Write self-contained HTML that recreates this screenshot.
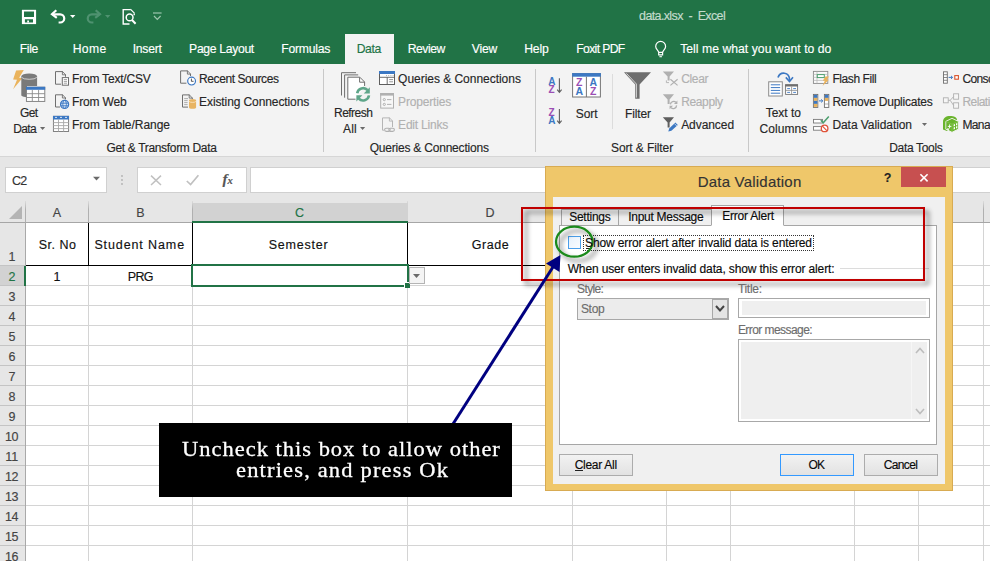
<!DOCTYPE html>
<html lang="en"><head><meta charset="utf-8"><title>data.xlsx - Excel</title>
<style>
html,body{margin:0;padding:0;background:#fff;}
#app{position:relative;width:990px;height:561px;overflow:hidden;background:#fff;font-family:"Liberation Sans",sans-serif;}
#app div,#app span,#app svg{position:absolute;}
.t{white-space:pre;line-height:1;-webkit-text-stroke:0.15px currentColor;}
.green{left:0;top:0;width:990px;height:64px;background:#217346;}
.tabsel{left:345px;top:34px;width:49px;height:31px;background:#f3f3f3;}
.ribbon{left:0;top:64px;width:990px;height:92px;background:#f3f3f3;}
.ribline{left:0;top:156px;width:990px;height:1px;background:#d6d6d6;}
.fbar{left:0;top:157px;width:990px;height:45px;background:#e6e6e6;}
.sep{width:1px;background:#c8c8c8;top:69px;height:83px;}
.sep2{width:1px;background:#dcdcdc;top:74px;height:55px;}
.box{background:#fff;border:1px solid #d0d0d0;box-sizing:border-box;}
.hdr{left:0;top:202px;width:990px;height:21px;background:#e6e6e6;}
.rowhdr{left:0;top:222px;width:25px;height:339px;background:#e6e6e6;}
.vl{width:1px;background:#d4d4d4;top:222px;height:339px;}
.hl{height:1px;background:#d4d4d4;left:25px;width:965px;}
.hs{width:1px;background:linear-gradient(#dcdcdc,#b0b0b0 40%);top:201px;height:21px;}
.rs{height:1px;background:#c4c4c4;left:0;width:25px;}
.bk{background:#000;}
.g{background:#217346;}
.dtab{box-sizing:border-box;border:1px solid #a6a6a6;background:#f0f0f0;}
.dbtn{box-sizing:border-box;border:1px solid #acacac;background:linear-gradient(#f2f2f2,#e2e2e2);}

</style></head>
<body>
<div id="app">
<div class="green"></div>
<div class="tabsel"></div>
<div class="ribbon"></div>
<div class="ribline"></div>
<div class="fbar"></div>
<div class="sep" style="left:323px"></div>
<div class="sep" style="left:535px"></div>
<div class="sep" style="left:748px"></div>
<div class="sep2" style="left:612px"></div>
<!-- formula bar -->
<div class="box" style="left:5px;top:167px;width:102px;height:26px"></div>
<div class="box" style="left:137px;top:167px;width:110px;height:26px"></div>
<div class="box" style="left:250px;top:167px;width:745px;height:26px"></div>
<!-- grid -->
<div class="hdr"></div>
<div class="rowhdr"></div>
<div class="vl" style="left:88px"></div>
<div class="vl" style="left:192px"></div>
<div class="vl" style="left:407px"></div>
<div class="vl" style="left:572px"></div>
<div class="vl" style="left:666px"></div>
<div class="vl" style="left:730px"></div>
<div class="vl" style="left:854px"></div>
<div class="vl" style="left:918px"></div>
<div class="vl" style="left:983px"></div>
<div class="hs" style="left:25px"></div>
<div class="hs" style="left:88px"></div>
<div class="hs" style="left:192px"></div>
<div class="hs" style="left:407px"></div>
<div class="hs" style="left:572px"></div>
<div class="hs" style="left:666px"></div>
<div class="hs" style="left:730px"></div>
<div class="hs" style="left:854px"></div>
<div class="hs" style="left:918px"></div>
<div class="hs" style="left:983px"></div>
<div class="hl" style="top:265px"></div>
<div class="rs" style="top:265px"></div>
<div class="hl" style="top:285px"></div>
<div class="rs" style="top:285px"></div>
<div class="hl" style="top:305px"></div>
<div class="rs" style="top:305px"></div>
<div class="hl" style="top:325px"></div>
<div class="rs" style="top:325px"></div>
<div class="hl" style="top:345px"></div>
<div class="rs" style="top:345px"></div>
<div class="hl" style="top:365px"></div>
<div class="rs" style="top:365px"></div>
<div class="hl" style="top:385px"></div>
<div class="rs" style="top:385px"></div>
<div class="hl" style="top:405px"></div>
<div class="rs" style="top:405px"></div>
<div class="hl" style="top:425px"></div>
<div class="rs" style="top:425px"></div>
<div class="hl" style="top:445px"></div>
<div class="rs" style="top:445px"></div>
<div class="hl" style="top:465px"></div>
<div class="rs" style="top:465px"></div>
<div class="hl" style="top:485px"></div>
<div class="rs" style="top:485px"></div>
<div class="hl" style="top:505px"></div>
<div class="rs" style="top:505px"></div>
<div class="hl" style="top:525px"></div>
<div class="rs" style="top:525px"></div>
<div class="hl" style="top:545px"></div>
<div class="rs" style="top:545px"></div>
<div style="left:0;top:222px;width:990px;height:1px;background:#a6a6a6"></div>
<div style="left:25px;top:222px;width:1px;height:339px;background:#a9a9a9"></div>
<div style="left:193px;top:203px;width:215px;height:19px;background:#d2d2d2"></div>
<div class="g" style="left:192px;top:221px;width:216px;height:2px"></div>
<div style="left:0;top:266px;width:24px;height:19px;background:#d2d2d2"></div>
<div class="g" style="left:24px;top:266px;width:2px;height:20px"></div>
<div class="bk" style="left:26px;top:265px;width:547px;height:1px"></div>
<div class="bk" style="left:88px;top:223px;width:1px;height:43px"></div>
<div class="bk" style="left:192px;top:223px;width:1px;height:43px"></div>
<div class="bk" style="left:407px;top:223px;width:1px;height:43px"></div>
<div class="bk" style="left:572px;top:223px;width:1px;height:43px"></div>
<div style="left:191px;top:264px;width:218px;height:23px;box-sizing:border-box;border:2px solid #217346"></div>
<div style="left:404px;top:282px;width:5px;height:5px;background:#217346;border:1px solid #fff;border-right:0;border-bottom:0"></div>
<div style="left:409px;top:267px;width:16px;height:17px;box-sizing:border-box;background:#f4f4f4;border:1px solid #b4b4b4"></div>
<svg style="left:413px;top:274px" width="8" height="5" viewBox="0 0 8 5"><path d="M0 0H7L3.5 4Z" fill="#6a6a6a"/></svg>
<svg style="left:8px;top:205px" width="15" height="15" viewBox="0 0 15 15"><path d="M14 1V14H1Z" fill="#b4b4b4"/></svg>
<!-- QAT -->
<svg style="left:21px;top:9px" width="16" height="16" viewBox="0 0 16 16"><path d="M.9 .8H15.1V15.1H.9Z" fill="#fff"/><path d="M3 2.4H13V8.1H3ZM3.9 10.3H12V13.6H3.9Z" fill="#217346"/><path d="M6.2 11.6H8V13.6H6.2Z" fill="#fff"/></svg>
<svg style="left:50px;top:9px" width="17" height="15" viewBox="0 0 17 15"><path d="M6.3 1.3L2 5.2L6.8 8.8" fill="none" stroke="#fff" stroke-width="2.2"/><path d="M2.4 5.4H10.2A4.05 4.05 0 0 1 10.2 13.5H8.6" fill="none" stroke="#fff" stroke-width="2.2"/></svg>
<svg style="left:70px;top:15px" width="6" height="3" viewBox="0 0 6 3"><path d="M0 0H5.4L2.7 3Z" fill="#fff"/></svg>
<svg style="left:85px;top:9px" width="17" height="15" viewBox="0 0 17 15"><path d="M10.7 1.3L15 5.2L10.2 8.8" fill="none" stroke="#4f9270" stroke-width="2.2"/><path d="M14.6 5.4H6.8A4.05 4.05 0 0 0 6.8 13.5H8.4" fill="none" stroke="#4f9270" stroke-width="2.2"/></svg>
<svg style="left:105px;top:15px" width="6" height="3" viewBox="0 0 6 3"><path d="M0 0H5.4L2.7 3Z" fill="#4f9270"/></svg>
<svg style="left:122px;top:8px" width="16" height="18" viewBox="0 0 16 18"><path d="M8.6 1.6H1.2V16H7.5M12.2 5.6V7.2" fill="none" stroke="#fff" stroke-width="1.4"/><path d="M8.4 1.2L12.6 5.4" fill="none" stroke="#fff" stroke-width="1.2"/><circle cx="7.6" cy="9.4" r="3.4" fill="none" stroke="#fff" stroke-width="1.5"/><path d="M10 12L13.6 15.8" stroke="#fff" stroke-width="2" fill="none"/></svg>
<svg style="left:153px;top:12px" width="9" height="9" viewBox="0 0 9 9"><path d="M0 1H8.6" stroke="#9cc5ad" stroke-width="1.2"/><path d="M1 4L4.3 7.4L7.6 4" fill="none" stroke="#9cc5ad" stroke-width="1.2"/></svg>
<!-- lightbulb -->
<svg style="left:654px;top:40px" width="14" height="19" viewBox="0 0 14 19"><path d="M4.7 12.4C4.7 10.4 1.7 9.4 1.7 6.4A4.95 4.95 0 0 1 11.6 6.4C11.6 9.4 8.6 10.4 8.6 12.4ZM4.7 12.4V14.9H8.6V12.4" fill="none" stroke="#fff" stroke-width="1.2"/><path d="M5.4 16.7H7.9" stroke="#fff" stroke-width="1.1"/></svg>
<!-- Get Data -->
<svg style="left:12px;top:69px" width="35" height="34" viewBox="12 69 35 34">
<path d="M16.1 70.4L23.8 70L19.1 77.7L22.5 78.1L13.1 89.2L17 79.8L13.1 79.4Z" fill="#eab35c"/>
<path d="M21.3 76.4V95.6C22.5 96.7 24.5 97.2 27 97.4V86H37.1V76.4Z" fill="#7a7a7a"/>
<ellipse cx="29.2" cy="76.4" rx="7.9" ry="2.9" fill="#7a7a7a"/>
<path d="M21.6 77.4A7.9 2.6 0 0 0 36.8 77.4" fill="none" stroke="#e4e4e4" stroke-width=".8"/>
<rect x="26.4" y="87.2" width="18.4" height="14.2" fill="#fff" stroke="#7a7a7a" stroke-width=".9"/>
<rect x="26" y="86.8" width="19.2" height="3" fill="#3c78c3"/>
<path d="M32.3 90V101.4M38.6 90V101.4M26.4 93.7H44.8M26.4 97.5H44.8" stroke="#8a8a8a" stroke-width=".9" fill="none"/>
</svg>
<svg style="left:40px;top:127px" width="6" height="3" viewBox="0 0 6 3"><path d="M0 0H5.2L2.6 3Z" fill="#6a6a6a"/></svg>
<!-- From Text/CSV -->
<svg style="left:54px;top:70px" width="16" height="17" viewBox="54 70 16 17">
<path d="M62.6 71.6H55.5V84.2H61M65.5 74.6V76.8" fill="none" stroke="#6f6f6f" stroke-width="1"/><path d="M62.4 71.4V74.8H65.6M62.4 71.4L65.6 74.8" fill="none" stroke="#6f6f6f" stroke-width=".9"/>
<rect x="62.3" y="77.6" width="6.2" height="7.6" fill="#fff" stroke="#6f6f6f" stroke-width="1"/>
<path d="M63.8 79.6H67M63.8 81.4H67M63.8 83.2H67" stroke="#8a8a8a" stroke-width=".8"/>
</svg>
<!-- From Web -->
<svg style="left:54px;top:93px" width="16" height="17" viewBox="54 93 16 17">
<path d="M62.6 94.8H55.5V107H60M65.5 97.8V99.4" fill="none" stroke="#6f6f6f" stroke-width="1"/><path d="M62.4 94.6V98H65.6M62.4 94.6L65.6 98" fill="none" stroke="#6f6f6f" stroke-width=".9"/>
<circle cx="64.6" cy="104.4" r="4" fill="#dbe7f6" stroke="#3c78c3" stroke-width="1.3"/>
<ellipse cx="64.6" cy="104.4" rx="1.8" ry="4" fill="none" stroke="#3c78c3" stroke-width=".9"/><path d="M60.8 103.2H68.4M60.8 105.8H68.4" stroke="#3c78c3" stroke-width=".9"/>
</svg>
<!-- From Table/Range -->
<svg style="left:52px;top:115px" width="18" height="18" viewBox="52 115 18 18">
<rect x="53.4" y="116.3" width="15.2" height="15.2" fill="#fff" stroke="#757575" stroke-width=".9"/>
<rect x="53" y="115.9" width="16" height="3.6" fill="#3c78c3"/>
<path d="M55 117.4H57M60 117.4H62M65 117.4H67" stroke="#fff" stroke-width=".8"/>
<path d="M58.5 119.5V131.5M63.6 119.5V131.5M53.4 122.6H68.6M53.4 125.6H68.6M53.4 128.6H68.6" stroke="#a8a8a8" stroke-width=".9" fill="none"/>
</svg>
<!-- Recent Sources -->
<svg style="left:179px;top:69px" width="18" height="18" viewBox="179 69 18 18">
<path d="M187.6 70.9H180.6V83.2H186.4M190.5 73.9V76" fill="none" stroke="#6f6f6f" stroke-width="1"/><path d="M187.4 70.7V74.1H190.6M187.4 70.7L190.6 74.1" fill="none" stroke="#6f6f6f" stroke-width=".9"/>
<circle cx="191.6" cy="81.1" r="3.9" fill="#fff" stroke="#3c78c3" stroke-width="1.2"/><path d="M191.4 78.6V81.3H193.6" fill="none" stroke="#444" stroke-width=".9"/>
</svg>
<!-- Existing Connections -->
<svg style="left:181px;top:93px" width="17" height="17" viewBox="181 93 17 17">
<path d="M189.4 94.9H182.5V107.1H188M192.3 97.9V99" fill="none" stroke="#6f6f6f" stroke-width="1"/><path d="M189.2 94.7V98.1H192.4M189.2 94.7L192.4 98.1" fill="none" stroke="#6f6f6f" stroke-width=".9"/>
<path d="M184.2 98.6H188M184.2 100.6H187.6M184.2 102.6H187.6M184.2 104.6H187.6" stroke="#9a9a9a" stroke-width=".8"/>
<path d="M189 100.4V107.2A3.55 1.5 0 0 0 196.1 107.2V100.4Z" fill="#e8b463"/><ellipse cx="192.55" cy="100.4" rx="3.55" ry="1.5" fill="#e8b463"/><path d="M189.2 101.4A3.5 1.4 0 0 0 195.9 101.4" fill="none" stroke="#fbe9cc" stroke-width=".8"/>
</svg>
<!-- Refresh All -->
<svg style="left:340px;top:71px" width="32" height="32" viewBox="340 71 32 32">
<path d="M341.5 95.5V72.7H356" fill="none" stroke="#6f6f6f" stroke-width="1"/>
<path d="M344.6 97.7V74.9H358.2" fill="none" stroke="#6f6f6f" stroke-width="1"/>
<path d="M355.5 99.2H347.8V77.2H359.8L364.6 82V86" fill="#fff" stroke="#6f6f6f" stroke-width="1"/>
<path d="M359.6 77.4V82.2H364.4" fill="none" stroke="#6f6f6f" stroke-width="1"/>
<path d="M357.2 93.2A6 6 0 0 1 367.6 90.2" fill="none" stroke="#5fa68a" stroke-width="2.6"/><path d="M369.8 87.2V93.4H363.8Z" fill="#5fa68a"/>
<path d="M369 95.4A6 6 0 0 1 358.6 98.4" fill="none" stroke="#5fa68a" stroke-width="2.6"/><path d="M356.4 101.4V95.2H362.4Z" fill="#5fa68a"/>
</svg>
<svg style="left:360px;top:127px" width="6" height="3" viewBox="0 0 6 3"><path d="M0 0H5.2L2.6 3Z" fill="#6a6a6a"/></svg>
<!-- Queries & Connections -->
<svg style="left:378px;top:70px" width="18" height="16" viewBox="378 70 18 16">
<rect x="379.5" y="71.5" width="15" height="13" fill="#fff" stroke="#5e5e5e" stroke-width="1"/><rect x="379" y="71" width="16" height="3" fill="#3c78c3"/>
<path d="M379.5 77.3H394.5M387.2 77.3V84.5" stroke="#5e5e5e" stroke-width=".9" fill="none"/><path d="M389.2 79.6H393M389.2 81.8H393" stroke="#7a7a7a" stroke-width=".8"/><path d="M386 75.6H387M388.2 75.6H389.2M390.4 75.6H391.4M392.6 75.6H393.6" stroke="#9a9a9a" stroke-width=".8"/>
</svg>
<!-- Properties -->
<svg style="left:379px;top:92px" width="16" height="18" viewBox="379 92 16 18">
<rect x="380.7" y="93.5" width="12.8" height="14.6" fill="#f7f7f7" stroke="#b0b0b0" stroke-width="1"/><rect x="380.2" y="93" width="13.8" height="2.6" fill="#b0b0b0"/>
<circle cx="384.3" cy="99.6" r="1.1" fill="none" stroke="#a8a8a8" stroke-width=".9"/><circle cx="384.3" cy="104.4" r="1.1" fill="none" stroke="#a8a8a8" stroke-width=".9"/><path d="M387 99.6H391.4M387 104.4H391.4" stroke="#a8a8a8" stroke-width=".9"/>
</svg>
<!-- Edit Links -->
<svg style="left:381px;top:116px" width="16" height="18" viewBox="381 116 16 18">
<path d="M389.6 117.9H382.5V130.2H384M392.5 120.9V127" fill="none" stroke="#b5b5b5" stroke-width="1"/><path d="M389.4 117.7V121.1H392.6M389.4 117.7L392.6 121.1" fill="none" stroke="#b5b5b5" stroke-width=".9"/>
<rect x="384.6" y="128.2" width="5.6" height="3.2" rx="1.6" fill="none" stroke="#b0b0b0" stroke-width="1.1"/><rect x="388.8" y="128.2" width="5.6" height="3.2" rx="1.6" fill="none" stroke="#b0b0b0" stroke-width="1.1"/>
</svg>
<!-- Sort AZ / ZA -->
<svg style="left:546px;top:74px" width="20" height="54" viewBox="546 74 20 54" font-family="Liberation Sans, sans-serif" font-weight="bold" font-size="10px">
<text x="548.3" y="84.9" fill="#3c78c3">A</text><text x="548.6" y="92.9" fill="#9b4fb3">Z</text>
<path d="M559.4 78.3V92M557.2 89.6L559.4 92.4L561.6 89.6" fill="none" stroke="#5e5e5e" stroke-width="1.1"/>
<text x="548.6" y="115.6" fill="#9b4fb3">Z</text><text x="548.3" y="123.8" fill="#3c78c3">A</text>
<path d="M559.4 109V123M557.2 120.6L559.4 123.4L561.6 120.6" fill="none" stroke="#5e5e5e" stroke-width="1.1"/>
</svg>
<!-- Sort big -->
<svg style="left:571px;top:72px" width="31" height="27" viewBox="571 72 31 27" font-family="Liberation Sans, sans-serif" font-weight="bold" font-size="10.5px">
<rect x="572.6" y="73.6" width="27.8" height="23.4" fill="#fff" stroke="#757575" stroke-width="1"/><rect x="572.1" y="73.1" width="28.8" height="3.6" fill="#3c78c3"/>
<path d="M586.4 76.7V97" stroke="#757575" stroke-width="1"/>
<text x="576" y="86" fill="#9b4fb3">Z</text><text x="575.5" y="95.3" fill="#3c78c3">A</text>
<text x="589.6" y="86" fill="#3c78c3">A</text><text x="590.1" y="95.3" fill="#9b4fb3">Z</text>
</svg>
<!-- Filter big -->
<svg style="left:623px;top:71px" width="30" height="29" viewBox="623 71 30 29">
<path d="M624 72.3H651L639.6 84.4V98.7H635.2V84.4Z" fill="#6e6e6e"/><path d="M626.4 73.4L636.4 84V97.6" fill="none" stroke="#e0e0e0" stroke-width=".9"/>
</svg>
<!-- Clear -->
<svg style="left:662px;top:70px" width="17" height="17" viewBox="662 70 17 17">
<path d="M662.8 71.4H674L669.6 76.6V80.4H667.6V76.6Z" fill="#b0b0b0"/><path d="M666.4 80.4V82.6H669" fill="none" stroke="#b0b0b0" stroke-width=".9"/>
<path d="M670.4 79.2L677.6 85.4M677.6 79.2L670.4 85.4" stroke="#b0b0b0" stroke-width="1.2" fill="none"/>
</svg>
<!-- Reapply -->
<svg style="left:662px;top:93px" width="17" height="17" viewBox="662 93 17 17">
<path d="M662.8 94.2H674L669.6 99.4V104H667.6V99.4Z" fill="#b0b0b0"/>
<path d="M670.4 104.4A3.3 3.3 0 0 1 676 102.4M676.6 105.4A3.3 3.3 0 0 1 671 107.6" fill="none" stroke="#b0b0b0" stroke-width="1.3"/><path d="M677.4 100.6V104H674Z M669.6 109.2V105.8H673Z" fill="#b0b0b0"/>
</svg>
<!-- Advanced -->
<svg style="left:662px;top:116px" width="17" height="17" viewBox="662 116 17 17">
<path d="M662.8 117.3H674L669.6 122.5V127.5H667.6V122.5Z" fill="#5e5e5e"/>
<path d="M668.3 131.4L669.2 128.6L675.4 122.6L677.8 125L671.4 130.8Z" fill="#3c78c3"/><path d="M674.4 123.6L676.8 126" stroke="#f3f3f3" stroke-width=".7"/>
</svg>
<!-- Text to Columns -->
<svg style="left:767px;top:71px" width="33" height="27" viewBox="767 71 33 27">
<rect x="768.7" y="81.8" width="13.6" height="14.2" fill="#fff" stroke="#8a8a8a" stroke-width="1"/>
<path d="M770.8 84.8H780.2M770.8 87.6H780.2M770.8 90.4H780.2M770.8 93.2H780.2" stroke="#3c78c3" stroke-width="1"/>
<rect x="785.6" y="84.8" width="12" height="9.6" fill="#fff" stroke="#757575" stroke-width=".9"/><rect x="785.2" y="84.3" width="12.8" height="2.2" fill="#6e6e6e"/>
<path d="M791.6 86.5V94.4M785.6 90.4H797.6" stroke="#8a8a8a" stroke-width=".8"/><path d="M787.2 88.6H790M793.2 88.6H796M787.2 92.4H790M793.2 92.4H796" stroke="#3c78c3" stroke-width=".9"/>
<path d="M778 77.6C780 71.4 789.4 71.4 789.6 80" fill="none" stroke="#3c78c3" stroke-width="1.7"/><path d="M785.8 77.4L789.5 81.6L793 77.2" fill="none" stroke="#3c78c3" stroke-width="1.6"/>
</svg>
<!-- Flash Fill -->
<svg style="left:812px;top:70px" width="18" height="18" viewBox="812 70 18 18">
<rect x="813.4" y="71.4" width="14.4" height="12" fill="#fafafa" stroke="#8a8a8a" stroke-width=".9"/>
<path d="M813.4 74.4H827.8M813.4 77.4H827.8M813.4 80.4H827.8M817 71.4V83.4" stroke="#b4b4b4" stroke-width=".7"/>
<rect x="817.3" y="74.6" width="7" height="3" fill="#fff" stroke="#4c9f6e" stroke-width="1"/>
<path d="M825.4 76.4L829 76.4L826.8 79.8L828.8 79.8L822.6 86L824.8 80.8L822.8 80.8Z" fill="#eab35c"/>
</svg>
<!-- Remove Duplicates -->
<svg style="left:812px;top:93px" width="18" height="16" viewBox="812 93 18 16">
<rect x="813.4" y="94.4" width="4.4" height="13" fill="#fff" stroke="#6e6e6e" stroke-width=".9"/>
<rect x="813.9" y="94.9" width="3.4" height="3" fill="#3c78c3"/><rect x="813.9" y="97.9" width="3.4" height="3" fill="#eab35c"/><rect x="813.9" y="100.9" width="3.4" height="3" fill="#3c78c3"/><rect x="813.9" y="103.9" width="3.4" height="3" fill="#eab35c"/>
<path d="M819 100.9H822.6M821.2 99.4L822.8 100.9L821.2 102.4" fill="none" stroke="#3c78c3" stroke-width="1"/>
<rect x="824.4" y="94.4" width="4.4" height="13" fill="#fff" stroke="#6e6e6e" stroke-width=".9"/>
<rect x="824.9" y="94.9" width="3.4" height="3" fill="#3c78c3"/><rect x="824.9" y="97.9" width="3.4" height="3" fill="#eab35c"/><path d="M824.4 104H828.8" stroke="#8a8a8a" stroke-width=".7"/>
</svg>
<!-- Data Validation -->
<svg style="left:812px;top:115px" width="19" height="19" viewBox="812 115 19 19">
<rect x="813.5" y="119.4" width="9" height="3.6" fill="#fff" stroke="#7a7a7a" stroke-width=".9"/><rect x="813.5" y="126.6" width="9" height="3.6" fill="#fff" stroke="#7a7a7a" stroke-width=".9"/>
<path d="M820.8 120.2L823.2 122.8L828.8 116.4" fill="none" stroke="#4c9f6e" stroke-width="1.5"/>
<circle cx="824.6" cy="128.4" r="3.3" fill="#fff" stroke="#e0533a" stroke-width="1.3"/><path d="M822.4 126.2L826.8 130.6" stroke="#e0533a" stroke-width="1.2"/>
</svg>
<svg style="left:922px;top:123px" width="6" height="3" viewBox="0 0 6 3"><path d="M0 0H5L2.5 3Z" fill="#6a6a6a"/></svg>
<!-- Consolidate -->
<svg style="left:942px;top:70px" width="18" height="15" viewBox="942 70 18 15">
<rect x="943.5" y="71.8" width="3.8" height="11.4" fill="#fff" stroke="#6e6e6e" stroke-width=".9"/><path d="M943.5 74.7H947.3M943.5 77.5H947.3M943.5 80.3H947.3" stroke="#6e6e6e" stroke-width=".8"/>
<path d="M948.6 77.4H952.4M951 75.9L952.6 77.4L951 78.9" fill="none" stroke="#3c78c3" stroke-width="1"/>
<rect x="954.8" y="75.6" width="3.6" height="3.6" fill="#fff" stroke="#d9532c" stroke-width="1.1"/>
</svg>
<!-- Relationships -->
<svg style="left:942px;top:92px" width="18" height="18" viewBox="942 92 18 18">
<rect x="943.4" y="97.8" width="4.8" height="5" fill="#f6f6f6" stroke="#b0b0b0" stroke-width=".9"/><rect x="953.6" y="93.8" width="5" height="5.4" fill="#f6f6f6" stroke="#b0b0b0" stroke-width=".9"/><rect x="953.6" y="102.8" width="5" height="5.4" fill="#f6f6f6" stroke="#b0b0b0" stroke-width=".9"/>
<path d="M948.2 100.3H950.2L953.6 96.6M950.2 100.3L953.6 105.4" fill="none" stroke="#b0b0b0" stroke-width=".9"/>
</svg>
<!-- Manage Data Model -->
<svg style="left:942px;top:115px" width="18" height="18" viewBox="942 115 18 18">
<path d="M943 129.6V121.6C943 118 946 116 950 116C954 116 957 117.2 957 120.4V124L947 131Z" fill="#6ab42d"/>
<path d="M952 118.3L958.3 121.4V129.2L952 132.2L945.8 129.2V121.4Z" fill="#6ab42d" stroke="#f3f3f3" stroke-width=".9" stroke-linejoin="round"/>
<path d="M952 124.2V132M945.8 121.4L952 124.2L958.3 121.4" fill="none" stroke="#8fcb5a" stroke-width=".6"/>
<path d="M953.6 124.6L955 124V126L953.6 126.6ZM956 123.6L957.2 123.1V125L956 125.5ZM953.6 127.6L955 127V129L953.6 129.6ZM956 126.6L957.2 126.1V128L956 128.5Z" fill="#fff"/>
<path d="M949.6 124.4V128.4M947.8 126.4H951.4M948 128.2V130.2M947 129.2H949" stroke="#fff" stroke-width=".9" fill="none"/>
</svg>
<!-- formula bar -->
<svg style="left:93px;top:176px" width="8" height="5" viewBox="0 0 8 5"><path d="M0 .8H7L3.5 4.6Z" fill="#6a6a6a"/></svg>
<svg style="left:120px;top:174px" width="4" height="12" viewBox="0 0 4 12"><circle cx="2" cy="2" r=".9" fill="#b0b0b0"/><circle cx="2" cy="6" r=".9" fill="#b0b0b0"/><circle cx="2" cy="10" r=".9" fill="#b0b0b0"/></svg>
<svg style="left:150px;top:175px" width="12" height="11" viewBox="0 0 12 11"><path d="M1 .6L11 10M11 .6L1 10" stroke="#c0c0c0" stroke-width="1.5" fill="none"/></svg>
<svg style="left:186px;top:174px" width="14" height="12" viewBox="0 0 14 12"><path d="M.8 7L4.6 10.6L12.4 1.2" stroke="#c0c0c0" stroke-width="1.7" fill="none"/></svg>

<!-- dialog -->
<div style="left:545px;top:166px;width:408px;height:325px;box-sizing:border-box;background:#efc76a;border:1px solid #d8ab52"></div>
<div style="left:553px;top:197px;width:392px;height:287px;background:#f0f0f0"></div>
<div style="left:901px;top:167px;width:45px;height:20px;background:#c75050"></div>
<svg style="left:918px;top:172px" width="12" height="12" viewBox="0 0 12 12"><path d="M2.4 2.2L9.6 9.4M9.6 2.2L2.4 9.4" stroke="#fff" stroke-width="1.6" fill="none"/></svg>
<!-- tab page -->
<div style="left:559px;top:225px;width:378px;height:220px;box-sizing:border-box;background:#fff;border:1px solid #a6a6a6"></div>
<div class="dtab" style="left:561px;top:209px;width:58px;height:17px"></div>
<div class="dtab" style="left:618px;top:209px;width:94px;height:17px"></div>
<div class="dtab" style="left:711px;top:205px;width:73px;height:21px;background:#fff;border-bottom-color:#fff"></div>
<!-- checkbox + focus rect -->
<div style="left:568px;top:236px;width:13px;height:13px;box-sizing:border-box;border:1px solid #4a9eea;background:linear-gradient(135deg,#e6f1fc,#fafcff)"></div>
<div style="left:583px;top:235px;width:231px;height:16px;box-sizing:border-box;border:1px dotted #333"></div>
<div style="left:840px;top:268px;width:89px;height:1px;background:#dcdcdc"></div>
<!-- style combo -->
<div style="left:577px;top:298px;width:152px;height:22px;box-sizing:border-box;border:1px solid #a8a8a8;background:#ececec"></div>
<div style="left:712px;top:299px;width:16px;height:20px;box-sizing:border-box;border:1px solid #a8a8a8;background:#e4e4e4"></div>
<svg style="left:715px;top:305px" width="10" height="8" viewBox="0 0 10 8"><path d="M1 1L5 5.5L9 1" stroke="#444" stroke-width="2" fill="none"/></svg>
<!-- title input -->
<div style="left:738px;top:298px;width:192px;height:20px;box-sizing:border-box;border:1px solid #a8a8a8;background:#fff"></div>
<div style="left:742px;top:301px;width:184px;height:14px;background:#efefef"></div>
<!-- message textarea -->
<div style="left:738px;top:339px;width:192px;height:83px;box-sizing:border-box;border:1px solid #a8a8a8;background:#fff"></div>
<div style="left:741px;top:342px;width:186px;height:77px;background:#efefef"></div>
<div style="left:911px;top:342px;width:1px;height:77px;background:#f6f6f6"></div>
<svg style="left:915px;top:347px" width="10" height="7" viewBox="0 0 10 7"><path d="M1 6L5 1.5L9 6" stroke="#bdbdbd" stroke-width="1.6" fill="none"/></svg>
<svg style="left:915px;top:408px" width="10" height="7" viewBox="0 0 10 7"><path d="M1 1L5 5.5L9 1" stroke="#bdbdbd" stroke-width="1.6" fill="none"/></svg>
<!-- buttons -->
<div class="dbtn" style="left:559px;top:454px;width:74px;height:22px"></div>
<div class="dbtn" style="left:780px;top:454px;width:74px;height:22px;border-color:#3399ff"></div>
<div class="dbtn" style="left:864px;top:454px;width:74px;height:22px"></div>
<div style="left:575px;top:470px;width:8px;height:1px;background:#222"></div>
<div style="left:586px;top:248px;width:6px;height:1px;background:#222"></div>
<!--DLGTEXT-->
<!-- annotations -->
<svg style="left:0;top:0" width="990" height="561" viewBox="0 0 990 561">
<defs><filter id="sh" x="-30%" y="-30%" width="170%" height="170%"><feGaussianBlur in="SourceAlpha" stdDeviation="2.5"/><feOffset dx="4" dy="4"/><feComponentTransfer><feFuncA type="linear" slope=".55"/></feComponentTransfer><feMerge><feMergeNode/><feMergeNode in="SourceGraphic"/></feMerge></filter></defs>
<rect x="522" y="208" width="402" height="72" fill="none" stroke="#c00000" stroke-width="2" filter="url(#sh)"/>
<ellipse cx="574.3" cy="241.7" rx="18.3" ry="15" fill="none" stroke="#1a8a1a" stroke-width="2.2" filter="url(#sh)"/>
<path d="M453 424L553 267" stroke="#000080" stroke-width="3" fill="none"/>
<path d="M560.5 255L559.5 272L546 263.5Z" fill="#000080"/>
</svg>
<div style="left:159px;top:423px;width:353px;height:74px;background:#000"></div>

<span class="t" style="left:19.7px;top:43.4px;font-size:12.2px;color:#ffffff;letter-spacing:-0.35px;">File</span>
<span class="t" style="left:72.7px;top:43.4px;font-size:12.2px;color:#ffffff;letter-spacing:0.36px;">Home</span>
<span class="t" style="left:132.7px;top:43.4px;font-size:12.2px;color:#ffffff;letter-spacing:-0.26px;">Insert</span>
<span class="t" style="left:189.1px;top:43.4px;font-size:12.2px;color:#ffffff;letter-spacing:-0.33px;">Page Layout</span>
<span class="t" style="left:281.2px;top:43.4px;font-size:12.2px;color:#ffffff;letter-spacing:-0.24px;">Formulas</span>
<span class="t" style="left:356.7px;top:43.4px;font-size:12.2px;color:#217346;letter-spacing:-0.38px;">Data</span>
<span class="t" style="left:407.7px;top:43.4px;font-size:12.2px;color:#ffffff;letter-spacing:-0.47px;">Review</span>
<span class="t" style="left:471.7px;top:43.4px;font-size:12.2px;color:#ffffff;letter-spacing:-0.20px;">View</span>
<span class="t" style="left:524.2px;top:43.4px;font-size:12.2px;color:#ffffff;letter-spacing:-0.16px;">Help</span>
<span class="t" style="left:576.2px;top:43.4px;font-size:12.2px;color:#ffffff;letter-spacing:-0.63px;">Foxit PDF</span>
<span class="t" style="left:680.2px;top:43.4px;font-size:12.2px;color:#ffffff;letter-spacing:0.03px;">Tell me what you want to do</span>
<span class="t" style="left:639.1px;top:10.0px;font-size:12.5px;color:#c4dccd;letter-spacing:-0.63px;">data.xlsx  -  Excel</span>
<span class="t" style="left:72.0px;top:73.3px;font-size:12px;color:#262626;letter-spacing:-0.20px;">From Text/CSV</span>
<span class="t" style="left:72.0px;top:95.9px;font-size:12px;color:#262626;letter-spacing:-0.17px;">From Web</span>
<span class="t" style="left:72.0px;top:119.4px;font-size:12px;color:#262626;letter-spacing:-0.03px;">From Table/Range</span>
<span class="t" style="left:19.9px;top:107.3px;font-size:12px;color:#262626;letter-spacing:-0.57px;">Get</span>
<span class="t" style="left:13.3px;top:123.4px;font-size:12px;color:#262626;letter-spacing:-0.65px;">Data</span>
<span class="t" style="left:106.4px;top:141.9px;font-size:12px;color:#262626;letter-spacing:-0.33px;">Get &amp; Transform Data</span>
<span class="t" style="left:199.1px;top:73.3px;font-size:12px;color:#262626;letter-spacing:-0.43px;">Recent Sources</span>
<span class="t" style="left:199.1px;top:95.9px;font-size:12px;color:#262626;letter-spacing:-0.10px;">Existing Connections</span>
<span class="t" style="left:334.0px;top:107.4px;font-size:12px;color:#262626;letter-spacing:-0.52px;">Refresh</span>
<span class="t" style="left:342.9px;top:123.4px;font-size:12px;color:#262626;letter-spacing:0.28px;">All</span>
<span class="t" style="left:398.1px;top:73.3px;font-size:12px;color:#262626;letter-spacing:-0.03px;">Queries &amp; Connections</span>
<span class="t" style="left:398.1px;top:95.9px;font-size:12px;color:#b1b1b1;letter-spacing:-0.17px;">Properties</span>
<span class="t" style="left:398.1px;top:119.4px;font-size:12px;color:#b1b1b1;letter-spacing:-0.21px;">Edit Links</span>
<span class="t" style="left:369.7px;top:141.9px;font-size:12px;color:#262626;letter-spacing:-0.21px;">Queries &amp; Connections</span>
<span class="t" style="left:575.7px;top:107.6px;font-size:12px;color:#262626;letter-spacing:-0.01px;">Sort</span>
<span class="t" style="left:625.0px;top:107.6px;font-size:12px;color:#262626;letter-spacing:-0.11px;">Filter</span>
<span class="t" style="left:681.2px;top:73.3px;font-size:12px;color:#b1b1b1;letter-spacing:-0.35px;">Clear</span>
<span class="t" style="left:681.2px;top:95.9px;font-size:12px;color:#b1b1b1;letter-spacing:-0.36px;">Reapply</span>
<span class="t" style="left:681.2px;top:119.4px;font-size:12px;color:#262626;letter-spacing:-0.07px;">Advanced</span>
<span class="t" style="left:611.0px;top:141.9px;font-size:12px;color:#262626;letter-spacing:-0.10px;">Sort &amp; Filter</span>
<span class="t" style="left:765.7px;top:106.6px;font-size:12px;color:#262626;letter-spacing:-0.03px;">Text to</span>
<span class="t" style="left:759.4px;top:123.4px;font-size:12px;color:#262626;letter-spacing:0.09px;">Columns</span>
<span class="t" style="left:832.4px;top:73.3px;font-size:12px;color:#262626;letter-spacing:-0.41px;">Flash Fill</span>
<span class="t" style="left:832.4px;top:95.9px;font-size:12px;color:#262626;letter-spacing:-0.23px;">Remove Duplicates</span>
<span class="t" style="left:832.4px;top:119.4px;font-size:12px;color:#262626;letter-spacing:-0.06px;">Data Validation</span>
<span class="t" style="left:889.2px;top:141.9px;font-size:12px;color:#262626;letter-spacing:-0.32px;">Data Tools</span>
<span class="t" style="left:962.4px;top:73.3px;font-size:12px;color:#262626;letter-spacing:-0.60px;">Consolidate</span>
<span class="t" style="left:962.4px;top:95.9px;font-size:12px;color:#b1b1b1;letter-spacing:-0.55px;">Relationships</span>
<span class="t" style="left:962.4px;top:119.4px;font-size:12px;color:#262626;letter-spacing:-0.60px;">Manage Data Model</span>
<span class="t" style="left:11.9px;top:175.0px;font-size:12.5px;color:#333;letter-spacing:-0.65px;">C2</span>
<span class="t" style="left:52.8px;top:206.8px;font-size:12.5px;color:#444;letter-spacing:0.26px;">A</span>
<span class="t" style="left:136.3px;top:206.8px;font-size:12.5px;color:#444;letter-spacing:0.26px;">B</span>
<span class="t" style="left:295.0px;top:206.8px;font-size:12.5px;color:#217346;letter-spacing:0.57px;">C</span>
<span class="t" style="left:485.5px;top:206.8px;font-size:12.5px;color:#444;letter-spacing:0.57px;">D</span>
<span class="t" style="left:38.7px;top:238.6px;font-size:12.5px;color:#111;letter-spacing:0.53px;">Sr. No</span>
<span class="t" style="left:94.4px;top:238.6px;font-size:12.5px;color:#111;letter-spacing:0.89px;">Student Name</span>
<span class="t" style="left:268.7px;top:238.6px;font-size:12.5px;color:#111;letter-spacing:0.77px;">Semester</span>
<span class="t" style="left:471.7px;top:238.6px;font-size:12.5px;color:#111;letter-spacing:0.59px;">Grade</span>
<span class="t" style="left:53.5px;top:270.7px;font-size:12.5px;color:#111;letter-spacing:-0.35px;">1</span>
<span class="t" style="left:127.8px;top:270.7px;font-size:12.5px;color:#111;letter-spacing:-0.65px;">PRG</span>
<span class="t" style="left:8.5px;top:250.6px;font-size:12.5px;color:#444;letter-spacing:-0.35px;">1</span>
<span class="t" style="left:8.5px;top:270.9px;font-size:12.5px;color:#217346;letter-spacing:-0.35px;">2</span>
<span class="t" style="left:8.6px;top:290.9px;font-size:12.5px;color:#444;letter-spacing:-0.15px;">3</span>
<span class="t" style="left:8.6px;top:310.9px;font-size:12.5px;color:#444;letter-spacing:-0.15px;">4</span>
<span class="t" style="left:8.6px;top:330.9px;font-size:12.5px;color:#444;letter-spacing:-0.15px;">5</span>
<span class="t" style="left:8.6px;top:350.9px;font-size:12.5px;color:#444;letter-spacing:-0.15px;">6</span>
<span class="t" style="left:8.6px;top:370.9px;font-size:12.5px;color:#444;letter-spacing:-0.15px;">7</span>
<span class="t" style="left:8.6px;top:390.9px;font-size:12.5px;color:#444;letter-spacing:-0.15px;">8</span>
<span class="t" style="left:8.6px;top:410.9px;font-size:12.5px;color:#444;letter-spacing:-0.15px;">9</span>
<span class="t" style="left:5.1px;top:430.9px;font-size:12.5px;color:#444;letter-spacing:-0.65px;">10</span>
<span class="t" style="left:5.2px;top:450.9px;font-size:12.5px;color:#444;letter-spacing:0.02px;">11</span>
<span class="t" style="left:5.1px;top:470.9px;font-size:12.5px;color:#444;letter-spacing:-0.65px;">12</span>
<span class="t" style="left:5.1px;top:490.9px;font-size:12.5px;color:#444;letter-spacing:-0.65px;">13</span>
<span class="t" style="left:5.1px;top:510.9px;font-size:12.5px;color:#444;letter-spacing:-0.65px;">14</span>
<span class="t" style="left:5.1px;top:530.9px;font-size:12.5px;color:#444;letter-spacing:-0.65px;">15</span>
<span class="t" style="left:5.1px;top:550.9px;font-size:12.5px;color:#444;letter-spacing:-0.65px;">16</span>
<span class="t" style="left:697.7px;top:174.1px;font-size:15px;color:#333;letter-spacing:0.21px;">Data Validation</span>
<span class="t" style="left:883.8px;top:172.3px;font-size:12.5px;color:#222;font-weight:bold;">?</span>
<span class="t" style="left:569.2px;top:211.1px;font-size:12px;color:#0a0a0a;letter-spacing:-0.25px;">Settings</span>
<span class="t" style="left:628.2px;top:211.1px;font-size:12px;color:#0a0a0a;letter-spacing:-0.27px;">Input Message</span>
<span class="t" style="left:722.3px;top:210.3px;font-size:12px;color:#0a0a0a;letter-spacing:-0.23px;">Error Alert</span>
<span class="t" style="left:585.1px;top:237.3px;font-size:12px;color:#0a0a0a;letter-spacing:-0.13px;">Show error alert after invalid data is entered</span>
<span class="t" style="left:567.7px;top:262.9px;font-size:12px;color:#0a0a0a;letter-spacing:-0.14px;">When user enters invalid data, show this error alert:</span>
<span class="t" style="left:577.1px;top:283.2px;font-size:12px;color:#6d6d6d;letter-spacing:-0.64px;">Style:</span>
<span class="t" style="left:580.9px;top:303.1px;font-size:12px;color:#6d6d6d;letter-spacing:-0.30px;">Stop</span>
<span class="t" style="left:737.9px;top:283.2px;font-size:12px;color:#6d6d6d;letter-spacing:-0.29px;">Title:</span>
<span class="t" style="left:737.9px;top:324.3px;font-size:12px;color:#6d6d6d;letter-spacing:-0.56px;">Error message:</span>
<span class="t" style="left:574.7px;top:459.3px;font-size:12px;color:#0a0a0a;letter-spacing:-0.29px;">Clear All</span>
<span class="t" style="left:808.4px;top:459.3px;font-size:12px;color:#0a0a0a;letter-spacing:-0.65px;">OK</span>
<span class="t" style="left:883.8px;top:459.3px;font-size:12px;color:#0a0a0a;letter-spacing:-0.65px;">Cancel</span>
<span class="t" style="left:182.3px;top:439.3px;font-size:21px;color:#fff;font-family:'Liberation Serif', serif;letter-spacing:0.94px;-webkit-text-stroke:0.3px #fff;transform:scaleX(1.07);transform-origin:0 0;">Uncheck this box to allow other</span>
<span class="t" style="left:235.7px;top:460.3px;font-size:21px;color:#fff;font-family:'Liberation Serif', serif;letter-spacing:1.10px;-webkit-text-stroke:0.3px #fff;transform:scaleX(1.07);transform-origin:0 0;">entries, and press Ok</span>
<span class="t" style="left:222.5px;top:172.3px;font-size:15px;color:#555;font-family:'Liberation Serif', serif;font-style:italic;font-weight:bold;">f<span style="position:static;font-size:10.5px">x</span></span>

</div>
</body></html>
